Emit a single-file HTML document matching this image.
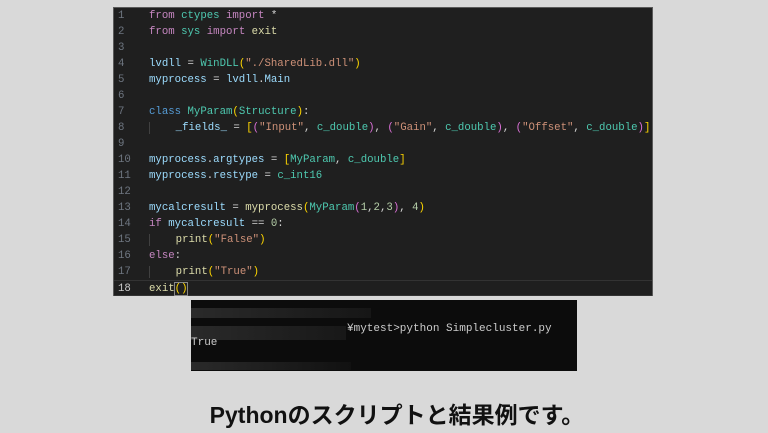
<!DOCTYPE html>
<html><head><meta charset="utf-8"><style>
body{margin:0;width:768px;height:433px;background:#d9d9d9;position:relative;overflow:hidden}
#code{position:absolute;left:113px;top:7px;width:540px;height:289px;background:#1f1f1f;border:1px solid #5a5a5a;box-sizing:border-box;font-family:"Liberation Mono",monospace;font-size:10.7px}
.l{position:absolute;left:0;height:16px;line-height:16px;white-space:pre;width:100%}
.n{position:absolute;left:4px;color:#6e7681}
.c{position:absolute;left:35px;color:#d4d4d4}
.k{color:#c586c0}.t{color:#4ec9b0}.v{color:#9cdcfe}.s{color:#ce9178}.f{color:#dcdcaa}.y{color:#ffd700}.p{color:#da70d6}.b{color:#569cd6}.u{color:#b5cea8}
.g{border-left:1px solid #404040}
#term{position:absolute;left:191px;top:300px;width:386px;height:71px;background:#0c0c0c;font-family:"Liberation Mono",monospace;font-size:11px;color:#ccc}
#cap{position:absolute;left:13px;width:768px;top:396px;text-align:center;font-family:"Liberation Sans","Noto Sans CJK JP",sans-serif;font-weight:bold;font-size:23px;color:#111}
</style></head><body>
<div id="code">
<div class="l" style="top:0px"><span class="n">1</span><span class="c"><span class="k">from</span> <span class="t">ctypes</span> <span class="k">import</span> *</span></div>
<div class="l" style="top:16px"><span class="n">2</span><span class="c"><span class="k">from</span> <span class="t">sys</span> <span class="k">import</span> <span class="f">exit</span></span></div>
<div class="l" style="top:32px"><span class="n">3</span></div>
<div class="l" style="top:48px"><span class="n">4</span><span class="c"><span class="v">lvdll</span> = <span class="t">WinDLL</span><span class="y">(</span><span class="s">"./SharedLib.dll"</span><span class="y">)</span></span></div>
<div class="l" style="top:64px"><span class="n">5</span><span class="c"><span class="v">myprocess</span> = <span class="v">lvdll</span>.<span class="v">Main</span></span></div>
<div class="l" style="top:80px"><span class="n">6</span></div>
<div class="l" style="top:96px"><span class="n">7</span><span class="c"><span class="b">class</span> <span class="t">MyParam</span><span class="y">(</span><span class="t">Structure</span><span class="y">)</span>:</span></div>
<div class="l" style="top:112px"><span class="n">8</span><span class="c"><span class="g">   </span> <span class="v">_fields_</span> = <span class="y">[</span><span class="p">(</span><span class="s">"Input"</span>, <span class="t">c_double</span><span class="p">)</span>, <span class="p">(</span><span class="s">"Gain"</span>, <span class="t">c_double</span><span class="p">)</span>, <span class="p">(</span><span class="s">"Offset"</span>, <span class="t">c_double</span><span class="p">)</span><span class="y">]</span></span></div>
<div class="l" style="top:128px"><span class="n">9</span></div>
<div class="l" style="top:144px"><span class="n">10</span><span class="c"><span class="v">myprocess</span>.<span class="v">argtypes</span> = <span class="y">[</span><span class="t">MyParam</span>, <span class="t">c_double</span><span class="y">]</span></span></div>
<div class="l" style="top:160px"><span class="n">11</span><span class="c"><span class="v">myprocess</span>.<span class="v">restype</span> = <span class="t">c_int16</span></span></div>
<div class="l" style="top:176px"><span class="n">12</span></div>
<div class="l" style="top:192px"><span class="n">13</span><span class="c"><span class="v">mycalcresult</span> = <span class="f">myprocess</span><span class="y">(</span><span class="t">MyParam</span><span class="p">(</span><span class="u">1</span>,<span class="u">2</span>,<span class="u">3</span><span class="p">)</span>, <span class="u">4</span><span class="y">)</span></span></div>
<div class="l" style="top:208px"><span class="n">14</span><span class="c"><span class="k">if</span> <span class="v">mycalcresult</span> == <span class="u">0</span>:</span></div>
<div class="l" style="top:224px"><span class="n">15</span><span class="c"><span class="g">   </span> <span class="f">print</span><span class="y">(</span><span class="s">"False"</span><span class="y">)</span></span></div>
<div class="l" style="top:240px"><span class="n">16</span><span class="c"><span class="k">else</span>:</span></div>
<div class="l" style="top:256px"><span class="n">17</span><span class="c"><span class="g">   </span> <span class="f">print</span><span class="y">(</span><span class="s">"True"</span><span class="y">)</span></span></div>
<div class="l" style="top:272px;border-top:1px solid #333;border-bottom:1px solid #333;box-sizing:border-box"><span class="n" style="color:#ccc">18</span><span class="c"><span class="f">exit</span><span class="y" style="outline:1px solid #888">()</span></span></div>
</div>
<div id="term">
<div style="position:absolute;left:0;top:8px;width:180px;height:10px;background:linear-gradient(90deg,#2a2a2a,#161616)"></div>
<div style="position:absolute;left:0;top:26px;width:155px;height:14px;background:linear-gradient(90deg,#2a2a2a,#181818)"></div>
<div style="position:absolute;left:156px;top:23px;white-space:nowrap">¥mytest&gt;python Simplecluster.py</div>
<div style="position:absolute;left:0;top:37px">True</div>
<div style="position:absolute;left:0;top:62px;width:160px;height:8px;background:linear-gradient(90deg,#2a2a2a,#111)"></div>
</div>
<div id="cap">Pythonのスクリプトと結果例です。</div>
</body></html>
